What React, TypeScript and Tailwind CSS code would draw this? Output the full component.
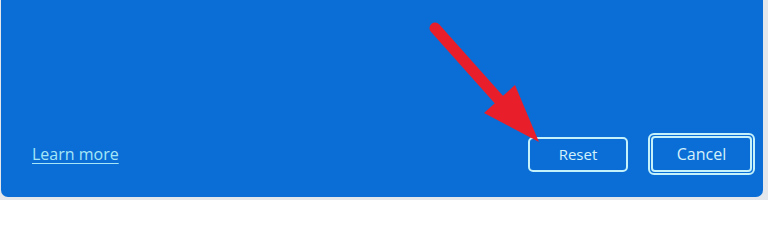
export default function App() {
  return (
    <div className="h-[200px] w-[768px] bg-[#e4e7eb] pl-[1px] pr-[5px] pb-[3px]" style={{ fontFamily: '"Open Sans", "Noto Sans", sans-serif' }}>
      <div className="relative flex h-full flex-col justify-end rounded-b-[7px] bg-[#0a6ed6]">
        <div className="flex items-center justify-between pb-[22px] pl-[31px] pr-[8px]">
          <a className="text-[16px] leading-none text-[#a6e6f7] underline underline-offset-[3px] decoration-[1px]">Learn more</a>
          <div className="flex items-center gap-[20px]">
            <button className="h-[35px] w-[100px] rounded-[5px] border-2 border-[#c4f1fa] text-[15px] text-[#d4f1fb]">Reset</button>
            <div className="rounded-[6px] border-2 border-[#c4f1fa] p-[1px]">
              <button className="h-[36px] w-[101px] rounded-[4px] border-2 border-[#c4f1fa] text-[16px] text-[#d4f1fb]">Cancel</button>
            </div>
          </div>
        </div>
        {/* red annotation arrow */}
        <svg className="pointer-events-none absolute left-0 top-0" width="768" height="200" viewBox="0 0 768 200">
          <line x1="434" y1="28" x2="500" y2="102" stroke="#e81f2a" strokeWidth="11" strokeLinecap="round" />
          <polygon points="483,113 514,85 538,142" fill="#e81f2a" />
        </svg>
      </div>
    </div>
  )
}
